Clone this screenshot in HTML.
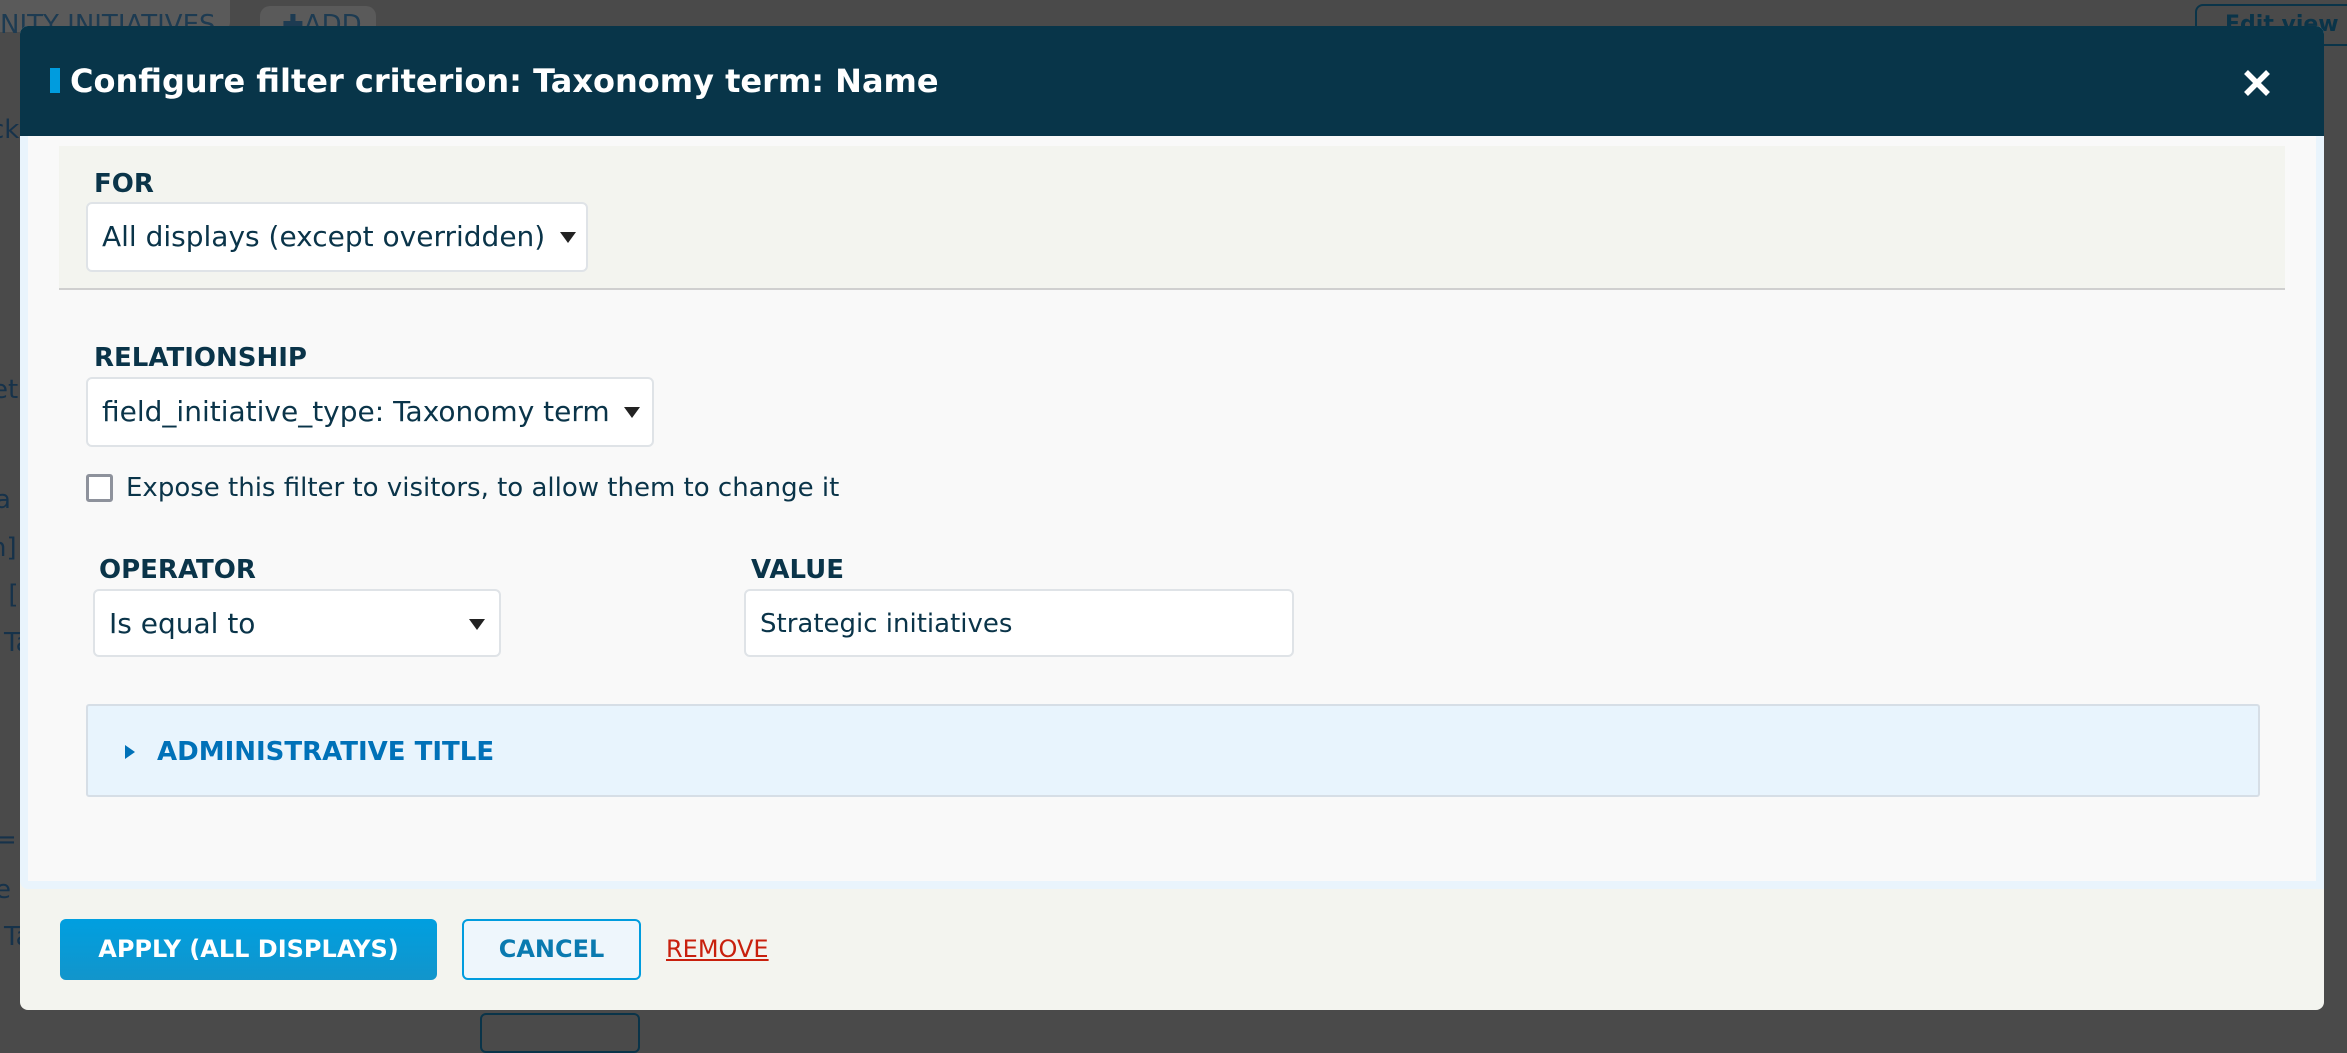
<!DOCTYPE html>
<html><head><meta charset="utf-8">
<style>
*{box-sizing:border-box;margin:0;padding:0}
body{width:2347px;height:1028px;overflow:hidden;background:#4a4a4a;font-family:"DejaVu Sans","Liberation Sans",sans-serif;position:relative;color:#0a3449}
.abs{position:absolute}
.bgtxt{color:#16324a;font-size:26px}
.dlg{position:absolute;left:20px;top:26px;width:2304px;height:984px;border-radius:8px;overflow:hidden;background:#f3f4ef}
.hdr{position:absolute;left:0;top:0;width:100%;height:110px;background:#083549}
.bar{position:absolute;left:30px;top:42px;width:10px;height:25px;background:#009cde}
.title{position:absolute;left:50px;top:36px;color:#fff;font-weight:bold;font-size:32px;white-space:nowrap}
.x{position:absolute;left:2222px;top:42px}
.bodyw{position:absolute;left:0;top:110px;width:2304px;height:753px;background:#e9f4fc;border-radius:0 0 0 8px}
.inner{position:absolute;left:8px;top:0;width:2288px;height:745px;background:#f9f9f9}
.lab{position:absolute;font-weight:bold;font-size:26px;color:#0a3449;white-space:nowrap}
.sel{position:absolute;background:#fff;border:2px solid #dfe3e7;border-radius:6px;font-size:28px;color:#0a3449;white-space:nowrap;padding-left:14px;line-height:66px}
.arr{position:absolute;top:28px;width:0;height:0;border-left:8px solid transparent;border-right:8px solid transparent;border-top:11px solid #222}
.btn{position:absolute;border-radius:6px;font-weight:bold;font-size:24px;text-align:center;line-height:60px}
</style></head><body>
<div class="abs" style="left:-20px;top:-10px;width:250px;height:42px;border-radius:10px;background:#5a5a5a"></div>
<div class="abs bgtxt" style="left:0;top:10px;color:#1d3b52">NITY INITIATIVES</div>
<div class="abs" style="left:260px;top:6px;width:116px;height:36px;border-radius:10px;background:#5a5a5a"></div>
<div class="abs bgtxt" style="left:282px;top:10px;color:#1d3b52">✚ADD</div>
<div class="abs" style="left:2195px;top:4px;width:170px;height:42px;border:2px solid #0a3449;border-radius:8px"></div>
<div class="abs" style="left:2225px;top:12px;font-weight:bold;font-size:22px;color:#0a3449">Edit view n</div>
<div class="abs bgtxt" style="left:-10px;top:115px">ck</div>
<div class="abs bgtxt" style="left:-8px;top:375px">et</div>
<div class="abs bgtxt" style="left:-5px;top:485px">a</div>
<div class="abs bgtxt" style="left:-10px;top:533px">n]</div>
<div class="abs bgtxt" style="left:-10px;top:580px">) [</div>
<div class="abs bgtxt" style="left:4px;top:628px">Ta</div>
<div class="abs bgtxt" style="left:-5px;top:825px">=</div>
<div class="abs bgtxt" style="left:-5px;top:875px">e</div>
<div class="abs bgtxt" style="left:4px;top:922px">Ta</div>
<div class="abs" style="left:480px;top:1013px;width:160px;height:40px;border:2px solid #0a3449;border-radius:6px"></div>

<div class="dlg">
 <div class="hdr">
  <div class="bar"></div>
  <div class="title">Configure filter criterion: Taxonomy term: Name</div>
  <svg class="x" width="30" height="30" viewBox="0 0 30 30"><path d="M4 4L26 26M26 4L4 26" stroke="#fff" stroke-width="5.5"/></svg>
 </div>
 <div class="bodyw"><div class="inner">
  <div class="abs" style="left:31px;top:10px;width:2226px;height:144px;background:#f3f4ef;border-bottom:2px solid #cfcfcf"></div>
  <div class="lab" style="left:66px;top:33px">FOR</div>
  <div class="sel" style="left:58px;top:66px;width:502px;height:70px">All displays (except overridden)<div class="arr" style="left:472px"></div></div>
  <div class="lab" style="left:66px;top:207px">RELATIONSHIP</div>
  <div class="sel" style="left:58px;top:241px;width:568px;height:70px">field_initiative_type: Taxonomy term<div class="arr" style="left:536px"></div></div>
  <div class="abs" style="left:58px;top:338px;width:27px;height:28px;border:3px solid #8e929c;border-radius:3px;background:#fff"></div>
  <div class="abs" style="left:98px;top:337px;font-size:26px;white-space:nowrap">Expose this filter to visitors, to allow them to change it</div>
  <div class="lab" style="left:71px;top:419px">OPERATOR</div>
  <div class="sel" style="left:65px;top:453px;width:408px;height:68px">Is equal to<div class="arr" style="left:374px"></div></div>
  <div class="lab" style="left:723px;top:419px">VALUE</div>
  <div class="sel" style="left:716px;top:453px;width:550px;height:68px;font-size:26px">Strategic initiatives</div>
  <div class="abs" style="left:58px;top:568px;width:2174px;height:93px;background:#e8f4fd;border:2px solid #d6dee6;border-radius:3px"></div>
  <div class="abs" style="left:97px;top:609px;width:0;height:0;border-top:7px solid transparent;border-bottom:7px solid transparent;border-left:10px solid #0071b8"></div>
  <div class="lab" style="left:129px;top:601px;color:#0071b8;font-size:26px">ADMINISTRATIVE TITLE</div>
 </div></div>
 <div class="btn" style="left:40px;top:893px;width:377px;height:61px;background:linear-gradient(#009fe0,#1295cb);color:#fff">APPLY (ALL DISPLAYS)</div>
 <div class="btn" style="left:442px;top:893px;width:179px;height:61px;background:#eef6fc;border:2px solid #009cde;color:#0a7ab0;line-height:57px">CANCEL</div>
 <div class="abs" style="left:646px;top:909px;font-size:24px;color:#c8200d;text-decoration:underline">REMOVE</div>
</div>
</body></html>
